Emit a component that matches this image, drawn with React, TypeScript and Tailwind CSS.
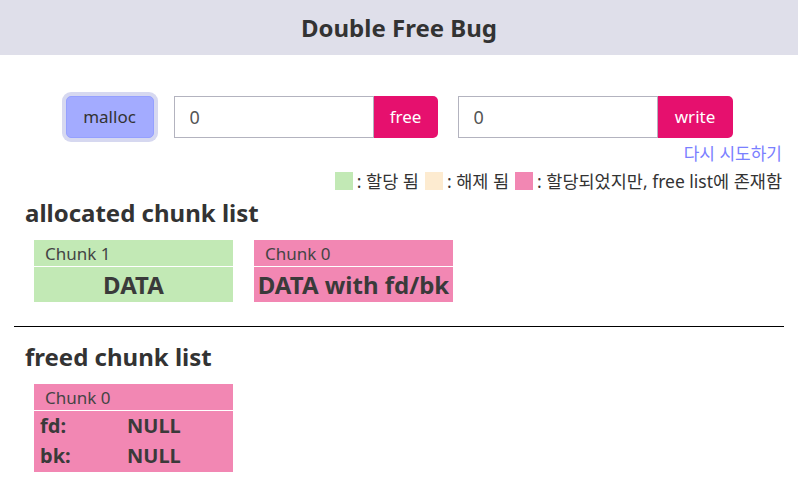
import React from "react";

const font = { fontFamily: '"Noto Sans", "Noto Sans CJK KR", sans-serif' };

// one chunk block: header line with name, body below
function ChunkBox({ name, color, children }: { name: string; color: string; children: React.ReactNode }) {
  return (
    <div className={`w-[199px] ${color}`}>
      <div className="h-[27px] border-b border-white pl-[11px] text-[17px] leading-[27px] text-[#444]">{name}</div>
      {children}
    </div>
  );
}

export default function App() {
  return (
    <div className="min-h-[504px] w-full bg-white text-[#3a3a3a]" style={font}>
      <div className="flex h-[55px] items-center justify-center bg-[#dfdfea]">
        <h1 className="text-[24px] font-bold text-[#333]">Double Free Bug</h1>
      </div>

      <div className="mt-[41px] flex items-center justify-center gap-5">
        <button className="h-[42px] w-[88px] rounded-[5px] border border-[#95a0ff] bg-[#a3abff] text-[17px] text-[#333] shadow-[0_0_0_4px_#d6d8f0]">
          malloc
        </button>
        <div className="flex">
          <input
            defaultValue="0"
            className="h-[42px] w-[200px] border border-[#b3b3bf] px-[15px] text-[18px] text-[#555] outline-none"
          />
          <button className="h-[42px] w-[64px] rounded-r-[5px] bg-[#e6106e] text-[17px] text-white">free</button>
        </div>
        <div className="flex">
          <input
            defaultValue="0"
            className="h-[42px] w-[200px] border border-[#b3b3bf] px-[15px] text-[18px] text-[#555] outline-none"
          />
          <button className="h-[42px] w-[75px] rounded-r-[5px] bg-[#e6106e] text-[17px] text-white">write</button>
        </div>
      </div>

      <div className="mt-[4px] pr-[16px] text-right text-[17px] leading-[24px] text-[#7a80ff]">다시 시도하기</div>

      <div className="mt-[4px] flex items-center justify-end gap-[4px] pr-[16px] text-[17.5px] leading-[22px] text-[#333]">
        <span className="h-[18px] w-[18px] bg-[#c2e9b5]" />
        <span className="mr-[2px]">: 할당 됨</span>
        <span className="h-[18px] w-[18px] bg-[#fdebd0]" />
        <span className="mr-[2px]">: 해제 됨</span>
        <span className="h-[18px] w-[18px] bg-[#f287b3]" />
        <span>: 할당되었지만, free list에 존재함</span>
      </div>

      <h2 className="mt-[6px] pl-[25px] text-[24px] font-bold leading-[30px] text-[#333]">allocated chunk list</h2>
      <div className="mt-[12px] flex gap-[21px] pl-[34px]">
        <ChunkBox name="Chunk 1" color="bg-[#c2e9b5]">
          <div className="h-[35px] text-center text-[24px] font-bold leading-[35px] text-[#3a3a3a]">DATA</div>
        </ChunkBox>
        <ChunkBox name="Chunk 0" color="bg-[#f287b3]">
          <div className="h-[35px] whitespace-nowrap text-center text-[24px] font-bold leading-[35px] text-[#3a3a3a]">
            DATA with fd/bk
          </div>
        </ChunkBox>
      </div>

      <hr className="mx-[14px] mt-[24px] border-t border-black" />

      <h2 className="mt-[15px] pl-[25px] text-[24px] font-bold leading-[30px] text-[#333]">freed chunk list</h2>
      <div className="mt-[12px] pl-[34px]">
        <ChunkBox name="Chunk 0" color="bg-[#f287b3]">
          <div className="h-[61px] pl-[6px] text-[20px] font-bold text-[#3a3a3a]">
            <div className="flex h-[30px] items-center">
              <span className="w-[87px]">fd:</span>
              <span>NULL</span>
            </div>
            <div className="flex h-[30px] items-center">
              <span className="w-[87px]">bk:</span>
              <span>NULL</span>
            </div>
          </div>
        </ChunkBox>
      </div>
    </div>
  );
}
